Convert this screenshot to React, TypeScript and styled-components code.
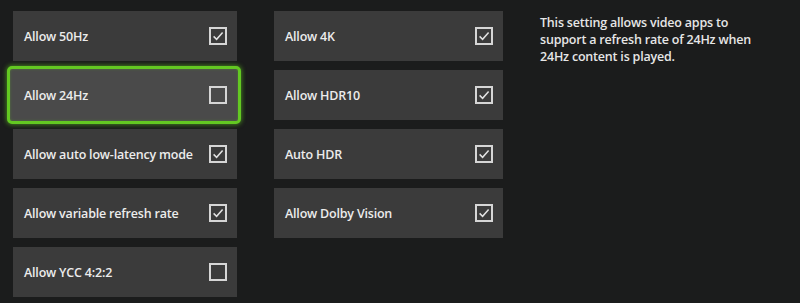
import styled, { createGlobalStyle } from 'styled-components';

const GlobalStyle = createGlobalStyle`
  html, body {
    margin: 0;
    padding: 0;
    background: #1b1c1c;
  }
  body {
    font-family: 'Open Sans', 'Noto Sans', 'Liberation Sans', sans-serif;
    width: 800px;
    height: 303px;
    overflow: hidden;
  }
`;

interface Setting {
  label: string;
  checked: boolean;
  focused?: boolean;
}

const leftColumn: Setting[] = [
  { label: 'Allow 50Hz', checked: true },
  { label: 'Allow 24Hz', checked: false, focused: true },
  { label: 'Allow auto low-latency mode', checked: true },
  { label: 'Allow variable refresh rate', checked: true },
  { label: 'Allow YCC 4:2:2', checked: false },
];

const rightColumn: Setting[] = [
  { label: 'Allow 4K', checked: true },
  { label: 'Allow HDR10', checked: true },
  { label: 'Auto HDR', checked: true },
  { label: 'Allow Dolby Vision', checked: true },
];

const Page = styled.div`
  display: flex;
  padding: 11px 0 0 13px;
  height: 303px;
  box-sizing: border-box;
`;

const Column = styled.div<{ $width: number }>`
  display: flex;
  flex-direction: column;
  gap: 9px;
  width: ${(p) => p.$width}px;
  margin-right: 37px;
`;

const Tile = styled.div<{ $focused?: boolean }>`
  display: flex;
  align-items: center;
  justify-content: space-between;
  box-sizing: border-box;
  height: 50px;
  padding: 0 10px 0 11px;
  background: #3b3b3b;
  color: #ececec;
  font-size: 12.5px;
  font-weight: 600;
  letter-spacing: -0.2px;

  ${(p) =>
    p.$focused &&
    `
    height: 58px;
    margin: -4px -4px -4px -6px;
    padding: 0 11px 0 14px;
    background: #4a4a4a;
    border: 3px solid #63c922;
    border-radius: 5px;
    box-shadow: 0 0 4px 1px rgba(99, 201, 34, 0.55), inset 0 0 3px rgba(99, 201, 34, 0.35);
  `}
`;

const Box = styled.div`
  width: 18px;
  height: 18px;
  box-sizing: border-box;
  border: 2px solid #d6d6d6;
  display: flex;
  align-items: center;
  justify-content: center;
  flex-shrink: 0;
`;

const Description = styled.p`
  margin: 3px 0 0 0;
  width: 230px;
  color: #e6e6e6;
  font-size: 12.5px;
  font-weight: 600;
  line-height: 17px;
  letter-spacing: -0.2px;
`;

const CheckBox = ({ checked }: { checked: boolean }) => (
  <Box>
    {checked && (
      <svg width="12" height="12" viewBox="0 0 12 12">
        <path d="M1.6 6.4 L4.6 9.3 L10.6 2.4" fill="none" stroke="#e2e2e2" strokeWidth="1.5" />
      </svg>
    )}
  </Box>
);

const SettingTile = ({ label, checked, focused }: Setting) => (
  <Tile $focused={focused}>
    <span>{label}</span>
    <CheckBox checked={checked} />
  </Tile>
);

export default function App() {
  return (
    <>
      <GlobalStyle />
      <Page>
        <Column $width={224}>
          {leftColumn.map((s) => (
            <SettingTile key={s.label} {...s} />
          ))}
        </Column>
        <Column $width={229}>
          {rightColumn.map((s) => (
            <SettingTile key={s.label} {...s} />
          ))}
        </Column>
        <Description>
          This setting allows video apps to support a refresh rate of 24Hz when 24Hz content is played.
        </Description>
      </Page>
    </>
  );
}
